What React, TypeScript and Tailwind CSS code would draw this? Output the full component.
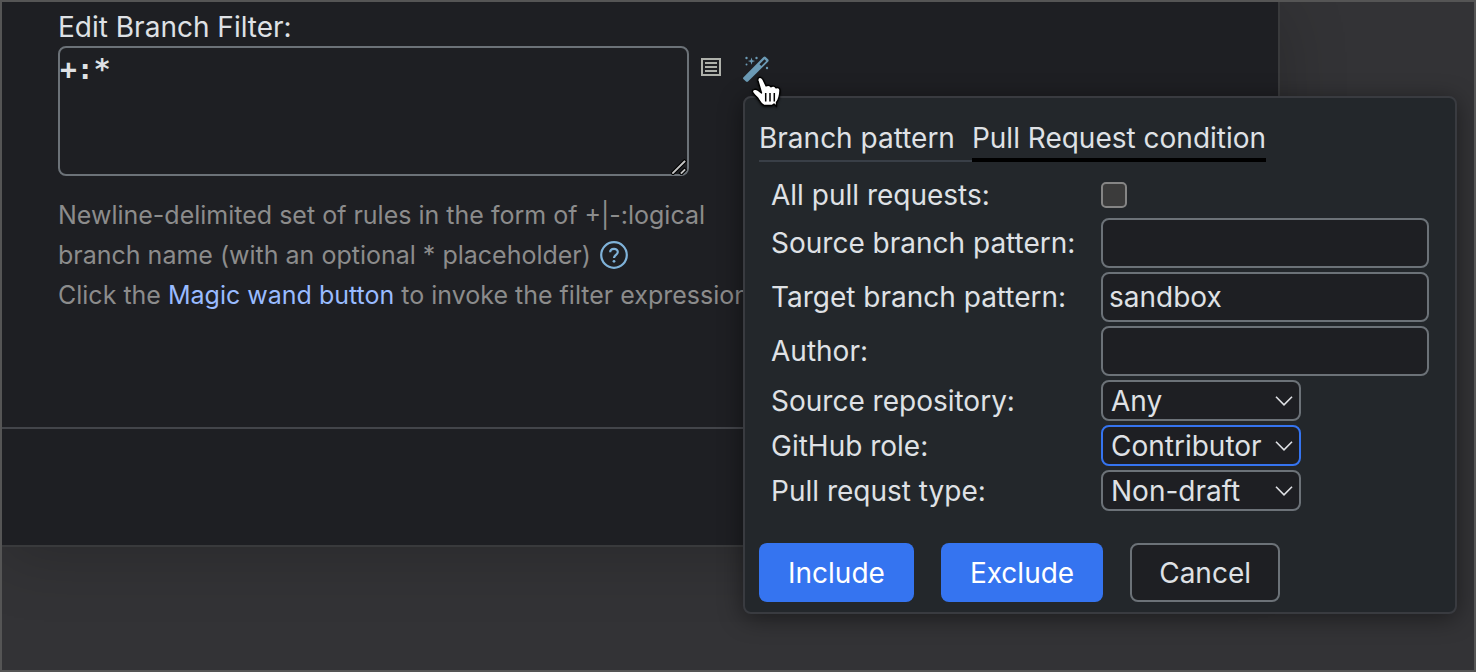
import type { ReactNode } from "react";

const control = "rounded-lg border-2 border-[#6c7278] bg-[#1e1f23] text-[#dfe1e5]";

function Row({ id, label, height, children }: { id: string; label: string; height: string; children: ReactNode }) {
  return (
    <div className={`flex items-center ${height}`}>
      <label htmlFor={id} className="w-[330px] shrink-0">
        {label}
      </label>
      {children}
    </div>
  );
}

function Select({ id, options, active = false }: { id: string; options: string[]; active?: boolean }) {
  return (
    <div className="grid w-[200px] items-center">
      <select
        id={id}
        defaultValue={options[0]}
        className={`col-start-1 row-start-1 h-[41px] w-full appearance-none rounded-lg border-2 bg-[#1e1f23] pl-2 text-[#dfe1e5] outline-none ${
          active ? "border-[#3574f0]" : "border-[#6c7278]"
        }`}
      >
        {options.map((option) => (
          <option key={option}>{option}</option>
        ))}
      </select>
      <svg
        viewBox="0 0 18 10"
        aria-hidden="true"
        className="pointer-events-none col-start-1 row-start-1 mr-2 h-[10px] w-[18px] justify-self-end"
        fill="none"
        stroke="#dfe1e5"
        strokeWidth="1.6"
      >
        <path d="M1 0.800L9 8.800L17 0.800" />
      </svg>
    </div>
  );
}

function TextField({ id, value = "" }: { id: string; value?: string }) {
  return <input id={id} type="text" defaultValue={value} className={`${control} h-[50px] min-w-0 flex-1 px-1.5 outline-none`} />;
}

function FilterPopup() {
  return (
    <div className="absolute top-[50px] left-0 z-10 w-[714px] rounded-lg border-2 border-[#393b40] bg-[#23272b] px-[14px] pt-5 pb-[10px] text-[#dfe1e5] shadow-[0_4px_24px_rgba(0,0,0,0.45)]">
      <div role="tablist" className="flex h-[44px]">
        <button role="tab" aria-selected="false" className="border-b-2 border-[#393f47] pr-[17px] pb-0.5 text-left">
          Branch pattern
        </button>
        <button role="tab" aria-selected="true" className="border-b-4 border-black">
          Pull Request condition
        </button>
      </div>
      <form className="mt-3 px-3">
        <Row id="all" label="All pull requests:" height="h-[42px]">
          <input
            id="all"
            type="checkbox"
            className="size-[26px] appearance-none rounded-[5px] border-2 border-[#858585] bg-[#3b3b3b]"
          />
        </Row>
        <Row id="source" label="Source branch pattern:" height="h-[54px]">
          <TextField id="source" />
        </Row>
        <Row id="target" label="Target branch pattern:" height="h-[54px]">
          <TextField id="target" value="sandbox" />
        </Row>
        <Row id="author" label="Author:" height="h-[54px]">
          <TextField id="author" />
        </Row>
        <Row id="repository" label="Source repository:" height="h-[45px]">
          <Select id="repository" options={["Any"]} />
        </Row>
        <Row id="role" label="GitHub role:" height="h-[45px]">
          <Select id="role" options={["Contributor"]} active />
        </Row>
        <Row id="type" label="Pull requst type:" height="h-[45px]">
          <Select id="type" options={["Non-draft"]} />
        </Row>
      </form>
      <div className="mt-[30px] flex gap-[27px]">
        <button className="h-[59px] rounded-lg bg-[#3574f0] px-[29px] text-white">Include</button>
        <button className="h-[59px] rounded-lg bg-[#3574f0] px-[29px] text-white">Exclude</button>
        <button className={`${control} h-[59px] px-[27px]`}>Cancel</button>
      </div>
    </div>
  );
}

export default function App() {
  return (
    <main className="min-h-screen overflow-hidden border-2 border-[#555555] bg-[#333336] font-['Inter',sans-serif] text-[28px] leading-[34px] text-[#dfe1e5]">
      <section className="mr-[194px] border-r-2 border-b-2 border-[#393a3c] bg-[#1e1f23] shadow-[0_8px_64px_rgba(0,0,0,0.2)]">
        <div className="h-[427px] border-b-2 border-[#43454a] pt-2 pl-14">
          <label htmlFor="filter" className="block">
            Edit Branch Filter:
          </label>
          <div className="mt-0.5 flex items-start">
            <div className="relative h-[130px] w-[631px]">
              <textarea
                id="filter"
                defaultValue="+:*"
                className={`${control} block size-full resize-none pt-[5px] font-['DejaVu_Sans_Mono',monospace] font-bold outline-none`}
              />
              <svg
                viewBox="0 0 16 16"
                aria-hidden="true"
                className="absolute right-[2px] bottom-px size-4"
                fill="none"
                strokeLinecap="square"
              >
                <path d="M2 14L13.500 2.500M10.500 14L13.500 11" stroke="#000000" strokeWidth="4" />
                <path d="M2 14L13.500 2.500M10.500 14L13.500 11" stroke="#c4c4c4" strokeWidth="1.800" />
              </svg>
            </div>
            <button aria-label="Show branches" className="mt-3 ml-3">
              <svg viewBox="0 0 20 18" className="h-[18px] w-5" fill="none" stroke="#afb1ab" strokeWidth="2">
                <path d="M1 1h18v16H1zM4 5h12M4 9h12M4 13h12" />
              </svg>
            </button>
            <div className="relative ml-[22px] pt-[10px]">
              <button aria-label="Magic wand" className="block">
                <svg viewBox="0 0 26 26" className="size-[26px]" fill="#6b9ab5">
                  <path
                    fillRule="evenodd"
                    d="M0.300 21.500L20.500 1Q21.700 0 22.700 1L25.300 3.500Q26 4.500 25.300 5.500L5 25.500Q4 26.300 3 25.500L0.300 23Q-.2 22.200 .3 21.500ZM16.500 8.300L18.300 10L23.200 5L21.500 3.300Z"
                  />
                  <path d="M8.500 1.500l.9 2.700 2.700.9-2.700.9-.9 2.700-.9-2.700-2.700-.9 2.700-.9z" />
                  <circle cx="3.500" cy="2" r="1.200" />
                  <circle cx="13.500" cy="2" r="1.200" />
                  <circle cx="3.500" cy="8.500" r="1" />
                  <circle cx="24" cy="12" r="1.200" />
                </svg>
              </button>
              <FilterPopup />
              <svg
                viewBox="0 0 32 34"
                aria-hidden="true"
                className="pointer-events-none absolute top-[30px] left-2 z-20 h-[34px] w-8 drop-shadow-[0_1px_1px_rgba(0,0,0,0.7)]"
                stroke="#000000"
                strokeLinejoin="round"
              >
                <path
                  d="M9 1.200C7 1.200 6.500 3 7 5L10.500 17L7 14.300C5 12.700 1.700 13 1.300 15.300C1.500 18 5 19.500 7 22.500C8.500 25 10 28 13 29.500H21L23 28L25.500 30.500V26.500C28.200 23 28.800 19 29 14.500C29 12 27 10.800 25 11.800C24 10 21.500 9.500 20 10.700C18.500 9 16.500 9 15 9.800L12 3.500C11.200 2 10.500 1.200 9 1.200Z"
                  fill="#ffffff"
                  strokeWidth="1.400"
                />
                <path d="M14.700 17v8.500M19 17v8.500M23.300 17v8.500" fill="none" strokeWidth="1.500" />
              </svg>
            </div>
          </div>
          <div className="mt-[19px] max-w-[700px] text-[25px] leading-10 whitespace-nowrap text-[#8c8c8c]">
            <p>Newline-delimited set of rules in the form of +|-:logical</p>
            <p className="flex items-center gap-2">
              branch name (with an optional * placeholder)
              <a href="#help" aria-label="Help">
                <svg viewBox="0 0 30 30" className="size-[30px]" fill="none" stroke="#7fb2d9" strokeWidth="2.200">
                  <circle cx="15" cy="15" r="12.800" />
                  <path d="M11.200 12.200C11.200 7.700 18.800 7.700 18.800 12C18.800 14.800 15 14.800 15 18" />
                  <circle cx="15" cy="21.300" r="1.400" fill="#7fb2d9" stroke="none" />
                </svg>
              </a>
            </p>
            <p>
              Click the{" "}
              <a href="#wand" className="text-[#99bbff]">
                Magic wand button
              </a>{" "}
              to invoke the filter expression
            </p>
          </div>
        </div>
        <div className="h-[116px]" />
      </section>
    </main>
  );
}
